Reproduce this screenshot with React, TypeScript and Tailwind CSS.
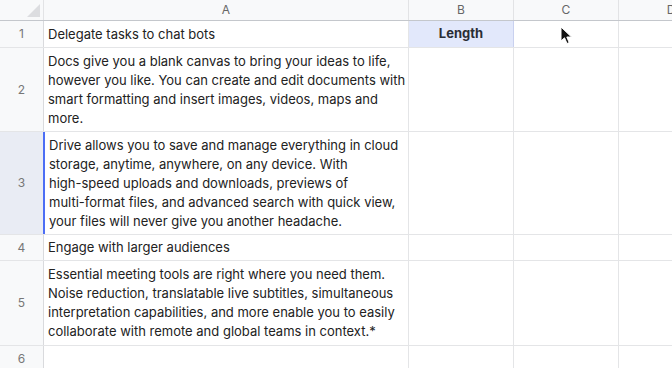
import React from "react";

type Row = { n: number; lines: string[]; h: string; b?: string; active?: boolean };

// line breaks follow the sheet's own wrapping (it only breaks at spaces)
const ROWS: Row[] = [
  { n: 1, lines: ["Delegate tasks to chat bots"], h: "h-[27px]", b: "Length" },
  {
    n: 2,
    lines: [
      "Docs give you a blank canvas to bring your ideas to life,",
      "however you like. You can create and edit documents with",
      "smart formatting and insert images, videos, maps and",
      "more.",
    ],
    h: "h-[84px]",
  },
  {
    n: 3,
    lines: [
      "Drive allows you to save and manage everything in cloud",
      "storage, anytime, anywhere, on any device. With",
      "high-speed uploads and downloads, previews of",
      "multi-format files, and advanced search with quick view,",
      "your files will never give you another headache.",
    ],
    h: "h-[103px]",
    active: true,
  },
  { n: 4, lines: ["Engage with larger audiences"], h: "h-[26px]" },
  {
    n: 5,
    lines: [
      "Essential meeting tools are right where you need them.",
      "Noise reduction, translatable live subtitles, simultaneous",
      "interpretation capabilities, and more enable you to easily",
      "collaborate with remote and global teams in context.*",
    ],
    h: "h-[85px]",
  },
  { n: 6, lines: [], h: "h-[26px]" },
];

const COLS = "grid grid-cols-[44px_365px_105px_105px_105px]";

function Cursor() {
  return (
    <svg width="14" height="20" viewBox="0 0 14 20" className="absolute left-[560px] top-[26px]">
      <path d="M1 1 L1 15 L4.5 11.8 L7 17.5 L9.2 16.6 L6.8 11 L11.5 11 Z" fill="#111" stroke="#fff" strokeWidth="1" strokeLinejoin="round" />
    </svg>
  );
}

export default function App() {
  return (
    <div
      className="relative w-[672px] h-[368px] overflow-hidden bg-white text-[#222]"
      style={{ fontFamily: "Inter, 'Noto Sans', sans-serif" }}
    >
      {/* column headers */}
      <div className={`${COLS} h-[21px] bg-[#f8f9fa] border-b border-[#c4c7cc] text-[12px] text-[#666]`}>
        <div className="relative border-r border-[#e2e3e5]">
          <div className="absolute right-[3px] bottom-[3px] w-0 h-0 border-l-[13px] border-l-transparent border-b-[13px] border-b-[#dcdde0]" />
        </div>
        {["A", "B", "C", "D"].map((c) => (
          <div key={c} className="flex items-center justify-center border-r border-[#e2e3e5]">
            {c}
          </div>
        ))}
      </div>

      {ROWS.map((r) => (
        <div key={r.n} className={`${COLS} ${r.h} border-b border-[#e4e5e7]`}>
          <div
            className={`flex items-center justify-center text-[12px] text-[#777] border-r border-[#d9dadd] ${
              r.active ? "bg-[#e9ecf4]" : "bg-[#f8f9fa]"
            }`}
          >
            {r.n}
          </div>
          <div
            className={`flex flex-col justify-center pl-[4px] text-[13px] leading-[19px] whitespace-nowrap overflow-hidden border-r border-[#e4e5e7] ${
              r.active ? "border-l-2 border-l-[#4c6ef5] -ml-px pl-[3px]" : ""
            }`}
          >
            {r.lines.map((l, i) => (
              <div key={i}>{l}</div>
            ))}
          </div>
          <div
            className={`flex items-center justify-center text-[13px] font-bold border-r ${
              r.b ? "bg-[#e2e8fb] border-[#c9d1ef] text-[#2a2d35]" : "border-[#e4e5e7]"
            }`}
          >
            {r.b}
          </div>
          <div className="border-r border-[#e4e5e7]" />
          <div className="border-r border-[#e4e5e7]" />
        </div>
      ))}

      <Cursor />
    </div>
  );
}
